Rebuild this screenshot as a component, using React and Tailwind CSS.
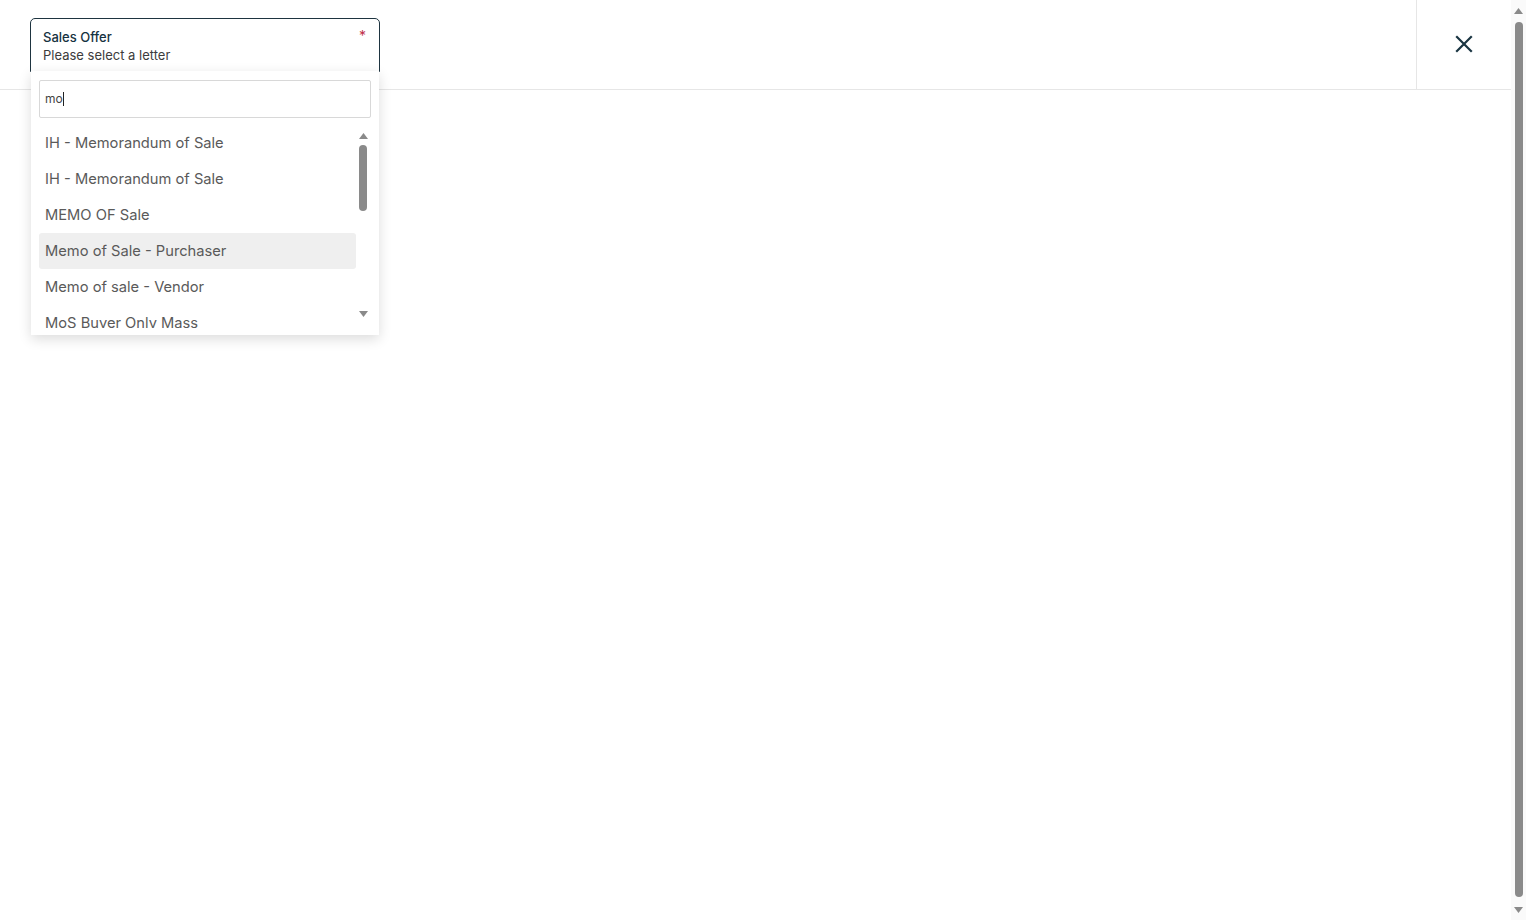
const items = [
  'IH - Memorandum of Sale',
  'IH - Memorandum of Sale',
  'MEMO OF Sale',
  'Memo of Sale - Purchaser',
  'Memo of sale - Vendor',
  'MoS Buyer Only Mass',
]

function Scrollbar({ thumbTop, thumbHeight, bottomGap, width }) {
  return (
    <div className={`${width} flex flex-col items-center`}>
      <svg width="9" height="6" viewBox="0 0 9 6" className="shrink-0"><path d="M4.5 0L9 6H0z" fill="#8a8a8a" /></svg>
      <div className={`${thumbTop} ${thumbHeight} w-[8px] rounded-full bg-[#8a8a8a] shrink-0`} />
      <div className="flex-1" />
      <svg width="9" height="6" viewBox="0 0 9 6" className={`shrink-0 ${bottomGap}`}><path d="M0 0H9L4.5 6z" fill="#8a8a8a" /></svg>
    </div>
  )
}

export default function App() {
  return (
    <div className="h-[920px] overflow-hidden bg-white flex font-['Inter',sans-serif]">
      <div className="flex-1">
        <header className="h-[90px] border-b border-[#e6e6e6] flex">
          <div className="flex-1 relative">
            <div className="absolute left-[30px] top-[18px] w-[350px] h-[54px] border border-[#1e3440] rounded-t-[5px] px-[12px] pt-[9px]">
              <div className="flex justify-between">
                <span className="text-[13px] font-medium text-[#16323f] leading-[18px]">Sales Offer</span>
                <span className="text-[#c0304a] text-[14px] leading-[16px] mr-[1px]">*</span>
              </div>
              <div className="text-[13px] text-[#3c3c3c] leading-[18px]">Please select a letter</div>
            </div>
            <div className="absolute left-[31px] top-[71px] w-[348px] h-[264px] bg-white shadow-[0_4px_12px_rgba(0,0,0,0.14)] z-10 px-[8px] pt-[9px]">
              <div className="h-[38px] border border-[#d8d8d8] rounded-[2px] flex items-center px-[5px]">
                <span className="text-[12px] text-[#444]">mo</span>
                <span className="w-px h-[14px] bg-[#222]" />
              </div>
              <div className="mt-[7px] h-[203px] overflow-hidden flex">
                <ul className="w-[317px]">
                  {items.map((t, i) => (
                    <li
                      key={i}
                      className={`h-[36px] flex items-center px-[6px] rounded-[3px] text-[14.7px] text-[#5a5a5a] ${i === 3 ? 'bg-[#efefef]' : ''}`}
                    >
                      {t}
                    </li>
                  ))}
                </ul>
                <div className="pt-[8px] flex">
                  <Scrollbar width="w-[14px]" thumbTop="mt-[6px]" thumbHeight="h-[66px]" bottomGap="mb-[11px]" />
                </div>
              </div>
            </div>
          </div>
          <div className="w-[95px] border-l border-[#e6e6e6] flex items-center justify-center">
            <svg width="18" height="18" viewBox="0 0 18 18" className="mt-[-2px]">
              <path d="M2 2L16 16M16 2L2 16" stroke="#1a3542" strokeWidth="2.2" strokeLinecap="square" />
            </svg>
          </div>
        </header>
      </div>
      <div className="w-[15px] bg-[#fafafa] pt-[8px] flex">
        <Scrollbar width="w-[15px]" thumbTop="mt-[8px]" thumbHeight="h-[875px]" bottomGap="mb-[7px]" />
      </div>
    </div>
  )
}
